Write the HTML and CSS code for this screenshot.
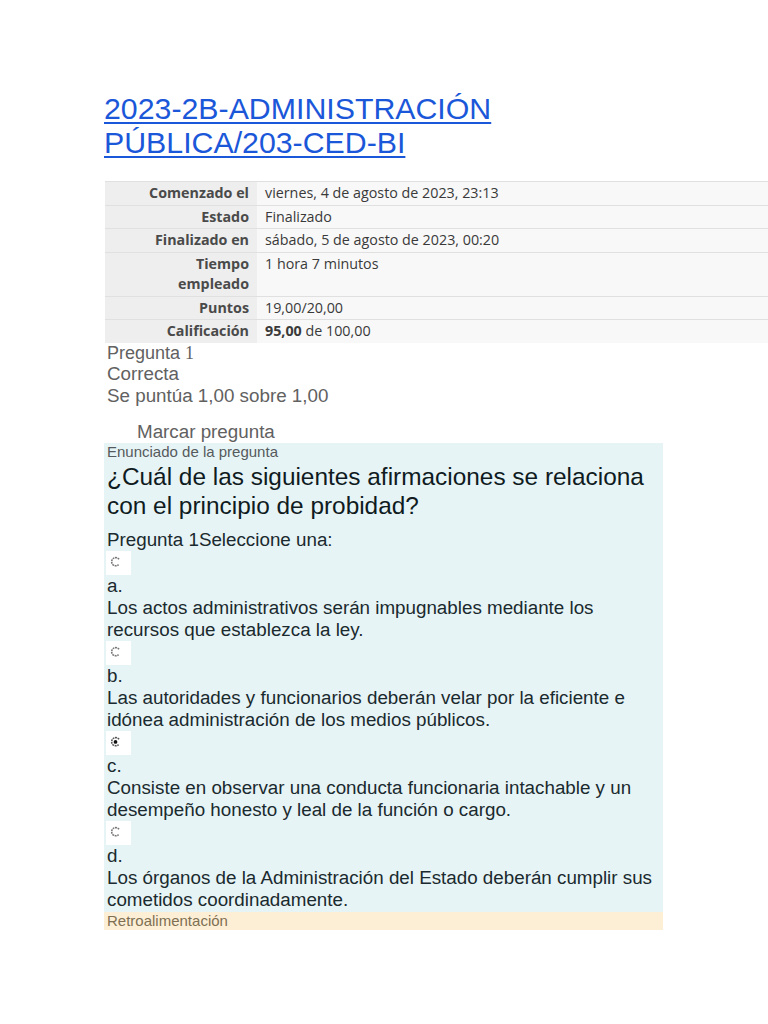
FILE: index.html
```html
<!DOCTYPE html>
<html lang="es">
<head>
<meta charset="utf-8">
<title>2023-2B-ADMINISTRACIÓN PÚBLICA/203-CED-BI</title>
<link rel="stylesheet" href="styles.css">
</head>
<body>
<div class="page">
  <h1 class="title"><a href="#">2023-2B-ADMINISTRACIÓN PÚBLICA/203-CED-BI</a></h1>

  <table class="summary">
    <tr><th>Comenzado el</th><td>viernes, 4 de agosto de 2023, 23:13</td></tr>
    <tr><th>Estado</th><td>Finalizado</td></tr>
    <tr><th>Finalizado en</th><td>sábado, 5 de agosto de 2023, 00:20</td></tr>
    <tr><th>Tiempo<br>empleado</th><td>1 hora 7 minutos</td></tr>
    <tr><th>Puntos</th><td>19,00/20,00</td></tr>
    <tr><th>Calificación</th><td><b>95,00</b> de 100,00</td></tr>
  </table>

  <div class="qinfo">
    <div class="qno">Pregunta <span class="num">1</span></div>
    <div class="state">Correcta</div>
    <div class="grade">Se puntúa 1,00 sobre 1,00</div>
    <div class="flag">Marcar pregunta</div>
  </div>

  <div class="formulation">
    <div class="label">Enunciado de la pregunta</div>
    <div class="qtext">¿Cuál de las siguientes afirmaciones se relaciona con el principio de probidad?</div>
    <div class="prompt">Pregunta 1Seleccione una:</div>

    <div class="option">
      <span class="radio"><svg width="11" height="11" viewBox="0 0 10 10"><path d="M8.2 3 A3.7 3.7 0 1 0 7.8 7.8" fill="none" stroke="#777" stroke-width="1.4" stroke-dasharray="1.7 0.6"/></svg></span>
      <div class="letter">a.</div>
      <div class="atext">Los actos administrativos serán impugnables mediante los recursos que establezca la ley.</div>
    </div>
    <div class="option">
      <span class="radio"><svg width="11" height="11" viewBox="0 0 10 10"><path d="M8.2 3 A3.7 3.7 0 1 0 7.8 7.8" fill="none" stroke="#777" stroke-width="1.4" stroke-dasharray="1.7 0.6"/></svg></span>
      <div class="letter">b.</div>
      <div class="atext">Las autoridades y funcionarios deberán velar por la eficiente e idónea administración de los medios públicos.</div>
    </div>
    <div class="option">
      <span class="radio"><svg width="11" height="11" viewBox="0 0 10 10"><path d="M8.2 3 A3.7 3.7 0 1 0 7.8 7.8" fill="none" stroke="#555" stroke-width="1.4" stroke-dasharray="1.7 0.6"/><circle cx="5" cy="5.4" r="1.7" fill="#111"/></svg></span>
      <div class="letter">c.</div>
      <div class="atext">Consiste en observar una conducta funcionaria intachable y un desempeño honesto y leal de la función o cargo.</div>
    </div>
    <div class="option">
      <span class="radio"><svg width="11" height="11" viewBox="0 0 10 10"><path d="M8.2 3 A3.7 3.7 0 1 0 7.8 7.8" fill="none" stroke="#777" stroke-width="1.4" stroke-dasharray="1.7 0.6"/></svg></span>
      <div class="letter">d.</div>
      <div class="atext">Los órganos de la Administración del Estado deberán cumplir sus cometidos coordinadamente.</div>
    </div>
  </div>

  <div class="feedback">Retroalimentación</div>
</div>
</body>
</html>
```

FILE: styles.css
```css
html, body {
  margin: 0;
  padding: 0;
  background: #ffffff;
}

body {
  font-family: "Liberation Sans", Arial, sans-serif;
  overflow-x: hidden;
}

.page {
  padding: 92px 0 0 104px;
}

.title {
  margin: 0;
  font-size: 30.3px;
  line-height: 34px;
  font-weight: normal;
  width: 420px;
}

.title a {
  color: #1b57d9;
  text-decoration: underline;
  text-decoration-thickness: 2px;
  text-underline-offset: 3px;
}

.summary {
  margin: 21px 0 0 1px;
  width: calc(100% - 1px);
  border-collapse: collapse;
  font-family: "Open Sans", sans-serif;
  font-size: 14.3px;
  line-height: 20.5px;
}

.summary tr {
  border-top: 1px solid #e0e0e0;
}

.summary th,
.summary td {
  padding: 1px 8px 1px 8px;
  vertical-align: top;
}

.summary th {
  width: 136px;
  text-align: right;
  font-weight: 700;
  color: #4a4a4a;
  background: #eeeeee;
}

.summary td {
  text-align: left;
  color: #3a3a3a;
  background: #f8f8f8;
}

.summary b {
  font-weight: 700;
}

.qinfo {
  padding-left: 3px;
  color: #616161;
}

.qno {
  font-size: 18px;
  line-height: 20px;
}

.qno .num {
  font-family: "Liberation Serif", "Times New Roman", serif;
}

.state,
.grade {
  font-size: 18.8px;
  line-height: 22.5px;
}

.flag {
  margin-top: 13.5px;
  padding-left: 30px;
  font-size: 18.8px;
  line-height: 22px;
}

.formulation {
  width: 556px;
  padding: 0 0 1px 3px;
  background: #e7f4f6;
  color: #1a2a2e;
}

.label {
  font-size: 15px;
  line-height: 17px;
  color: #555a5c;
}

.qtext {
  margin-top: 2px;
  font-size: 24.4px;
  line-height: 29px;
  color: #0f1b1e;
}

.prompt {
  margin-top: 9px;
  font-size: 18.8px;
  line-height: 22px;
}

.option {
  font-size: 18.8px;
  line-height: 22px;
}

.radio {
  display: flex;
  align-items: center;
  justify-content: flex-start;
  width: 25px;
  height: 24px;
  margin-left: -1px;
  padding-left: 4px;
  box-sizing: border-box;
  background: #ffffff;
}

.radio svg {
  display: block;
  margin-top: -4px;
}

.feedback {
  width: 556px;
  padding: 0 0 0 3px;
  background: #fcefd6;
  font-size: 15px;
  line-height: 18px;
  color: #7f6f52;
}
```
